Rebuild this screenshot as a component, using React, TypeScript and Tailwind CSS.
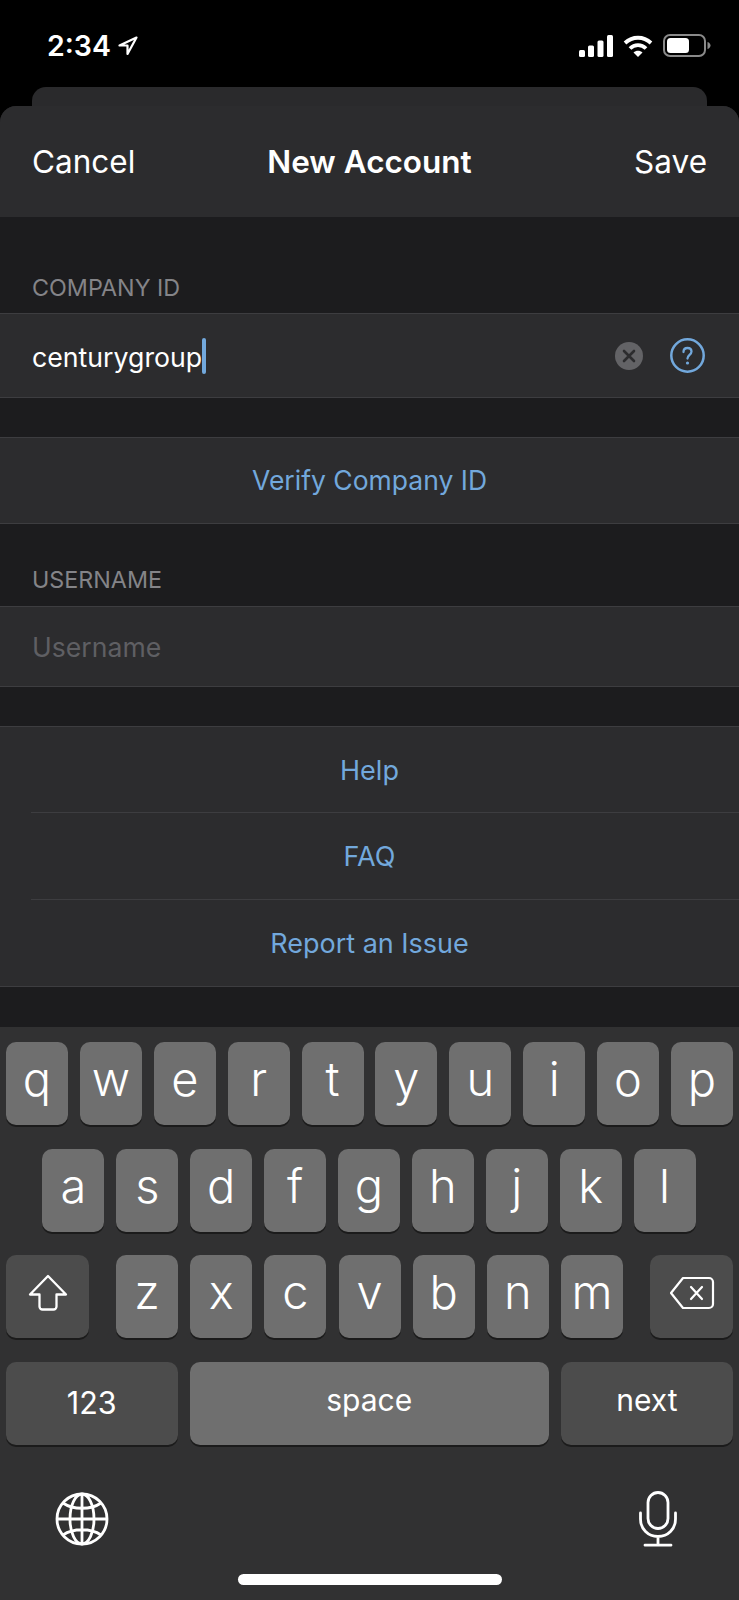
const font = { fontFamily: 'Inter, "Liberation Sans", sans-serif' };
const BLUE = "#72a8dc";

function Key({ label, wide, dark, children, size }: { label?: string; wide?: string; dark?: boolean; children?: React.ReactNode; size?: string }) {
  return (
    <div
      className={`flex h-[83px] items-center justify-center rounded-[10px] shadow-[0_2px_0_#1b1b1b] text-white ${
        dark ? "bg-[#4c4c4c]" : "bg-[#6f6f6f]"
      } ${wide ?? "w-[62px]"} ${size ?? "text-[47px] font-light pb-[8px]"}`}
    >
      {label}
      {children}
    </div>
  );
}

function GroupRow({ children, className }: { children: React.ReactNode; className?: string }) {
  return <div className={`flex items-center justify-center bg-[#2c2c2e] text-[#72a8dc] ${className ?? "text-[27px]"}`}>{children}</div>;
}

export default function App() {
  const row1 = ["q", "w", "e", "r", "t", "y", "u", "i", "o", "p"];
  const row2 = ["a", "s", "d", "f", "g", "h", "j", "k", "l"];
  const row3 = ["z", "x", "c", "v", "b", "n", "m"];
  return (
    <div className="flex h-[1600px] w-[739px] flex-col overflow-hidden bg-black text-white" style={font}>
      {/* status bar */}
      <div className="flex h-[87px] shrink-0 items-start justify-between pl-[47px] pr-[28px] pt-[28px]">
        <div className="flex items-center gap-[7px]">
          <span className="text-[28.500px] font-semibold leading-[36px]">2:34</span>
          <svg width="20" height="20" viewBox="0 0 20 20" fill="none" stroke="#fff" strokeWidth="2.2" strokeLinejoin="round">
            <path d="M18.500 1.500 1.500 9.500h8v8.500z" />
          </svg>
        </div>
        <div className="flex items-center gap-[10px] pt-[6px]">
          <svg width="34" height="22" viewBox="0 0 34 22" fill="#fff">
            <rect x="0" y="15" width="6" height="7" rx="1.5" />
            <rect x="9" y="10.5" width="6" height="11.5" rx="1.5" />
            <rect x="18.5" y="5.5" width="6" height="16.5" rx="1.5" />
            <rect x="28" y="0" width="6" height="22" rx="1.5" />
          </svg>
          <svg width="30" height="22" viewBox="0 0 30 22" fill="none" stroke="#fff" strokeWidth="3.8">
            <path d="M2 8C9.5 1 20.5 1 28 8" />
            <path d="M7 13.5C11.5 9 18.5 9 23 13.5" />
            <path d="M15 22 10.5 17.5C13 15.2 17 15.2 19.5 17.5z" fill="#fff" stroke="none" />
          </svg>
          <svg width="48" height="23" viewBox="0 0 48 23" fill="none">
            <rect x="1" y="1" width="41" height="21" rx="6" stroke="#8a8a8a" strokeWidth="2" />
            <rect x="4" y="4" width="22" height="15" rx="3.5" fill="#fff" />
            <path d="M44.5 8c2 .6 3 2 3 3.5s-1 2.900-3 3.500z" fill="#8a8a8a" />
          </svg>
        </div>
      </div>
      {/* card behind the sheet */}
      <div className="mx-[32px] h-[19px] shrink-0 rounded-t-[14px] bg-[#2a2a2c]" />
      {/* sheet */}
      <div className="flex min-h-0 flex-1 flex-col overflow-hidden rounded-t-[16px] bg-[#1c1c1e]">
        <div className="grid h-[111px] shrink-0 grid-cols-[1fr_auto_1fr] items-center bg-[#2c2c2e] px-[32px] text-[31.500px]">
          <span>Cancel</span>
          <span className="font-semibold">New Account</span>
          <span className="text-right">Save</span>
        </div>
        <div className="flex h-[96px] shrink-0 items-end pb-[7px] pl-[32px] text-[23.300px] text-[#848488]">COMPANY ID</div>
        <div className="flex h-[85px] shrink-0 items-center border-y border-[#3d3d40] bg-[#2c2c2e] pl-[32px] pr-[34px]">
          <span className="pt-[3px] text-[26.700px]">centurygroup</span>
          <span className="h-[36px] w-[4px] rounded-full bg-[#72a8dc]" />
          <svg className="ml-auto" width="28" height="28" viewBox="0 0 28 28">
            <circle cx="14" cy="14" r="14" fill="#636366" />
            <path d="M9 9 19 19M19 9 9 19" stroke="#2c2c2e" strokeWidth="2.6" strokeLinecap="round" />
          </svg>
          <svg className="ml-[27px]" width="35" height="35" viewBox="0 0 35 35" fill="none">
            <circle cx="17.500" cy="17.500" r="16.200" stroke={BLUE} strokeWidth="2.500" />
            <path d="M13.500 14c0-2.500 1.800-4 4-4 2.400 0 4 1.500 4 3.600 0 3.200-4 3.400-4 6.900" stroke={BLUE} strokeWidth="2.300" strokeLinecap="round" />
            <circle cx="17.500" cy="25" r="1.600" fill={BLUE} />
          </svg>
        </div>
        <div className="h-[39px] shrink-0" />
        <GroupRow className="h-[87px] shrink-0 border-y border-[#3d3d40] pt-[1px] text-[26.500px]">Verify Company ID</GroupRow>
        <div className="flex h-[82px] shrink-0 items-end pb-[8px] pl-[32px] text-[23.300px] text-[#848488]">USERNAME</div>
        <div className="flex h-[81px] shrink-0 items-center border-y border-[#3d3d40] bg-[#2c2c2e] pl-[32px] pt-[3px] text-[26.600px] text-[#5f5f63]">Username</div>
        <div className="h-[39px] shrink-0" />
        <div className="shrink-0 border-y border-[#3d3d40] bg-[#2c2c2e]">
          <GroupRow className="h-[85px] pt-[3px] text-[27px]">Help</GroupRow>
          <div className="ml-[31px] h-px bg-[#3d3d40]" />
          <GroupRow className="h-[86px] pt-[3px] text-[27px]">FAQ</GroupRow>
          <div className="ml-[31px] h-px bg-[#3d3d40]" />
          <GroupRow className="h-[86px] pt-[3px] text-[27px]">Report an Issue</GroupRow>
        </div>
        <div className="h-[40px] shrink-0" />
        {/* keyboard */}
        <div className="flex flex-1 flex-col bg-[#313132] pt-[15px]">
          <div className="flex flex-col gap-[23.500px] px-[6px]">
            <div className="flex justify-between">
              {row1.map((k) => (
                <Key key={k} label={k} />
              ))}
            </div>
            <div className="flex justify-center gap-[11.900px] pr-[1px]">
              {row2.map((k) => (
                <Key key={k} label={k} />
              ))}
            </div>
            <div className="flex justify-between">
              <Key dark wide="w-[83px]">
                <svg width="40" height="38" viewBox="0 0 40 38" fill="none" stroke="#fff" strokeWidth="2.300" strokeLinejoin="round">
                  <path d="M20 2 38 20.500H28.500V32.500a3 3 0 0 1-3 3h-11a3 3 0 0 1-3-3V20.500H2z" />
                </svg>
              </Key>
              <div className="flex gap-[12.200px]">
                {row3.map((k) => (
                  <Key key={k} label={k} />
                ))}
              </div>
              <Key dark wide="w-[83px]">
                <svg width="46" height="34" viewBox="0 0 46 34" fill="none" stroke="#fff" strokeWidth="2.200" strokeLinejoin="round">
                  <path d="M14 2H40a4 4 0 0 1 4 4V28a4 4 0 0 1-4 4H14L2 17z" />
                  <path d="M22 11 33 23M33 11 22 23" strokeLinecap="round" />
                </svg>
              </Key>
            </div>
            <div className="flex justify-between">
              <Key dark wide="w-[171.500px]" size="text-[30.500px] font-normal pb-[1px]">123</Key>
              <Key wide="w-[359px]" size="text-[30px] font-normal pb-[6px]">space</Key>
              <Key dark wide="w-[172px]" size="text-[30px] font-normal pb-[6px]">next</Key>
            </div>
          </div>
          <div className="mt-[46px] flex h-[56px] items-center justify-between pl-[55px] pr-[62px]">
            <svg width="54" height="54" viewBox="0 0 54 54" fill="none" stroke="#fff" strokeWidth="2.800">
              <circle cx="27" cy="27" r="25" />
              <ellipse cx="27" cy="27" rx="12" ry="25" />
              <path d="M27 2V52M2 27H52M8 11C18 18 36 18 46 11M8 43C18 36 36 36 46 43" />
            </svg>
            <svg width="38" height="56" viewBox="0 0 38 56" fill="none" stroke="#fff" strokeWidth="2.800" strokeLinecap="round">
              <rect x="9" y="1.500" width="20" height="36" rx="10" />
              <path d="M1.500 22v6c0 10 7.500 17.500 17.500 17.500S36.500 38 36.500 28v-6M19 45.500V53M6 54.200H32" />
            </svg>
          </div>
          <div className="mx-auto mt-[27px] h-[11px] w-[264px] rounded-full bg-white" />
        </div>
      </div>
    </div>
  );
}
